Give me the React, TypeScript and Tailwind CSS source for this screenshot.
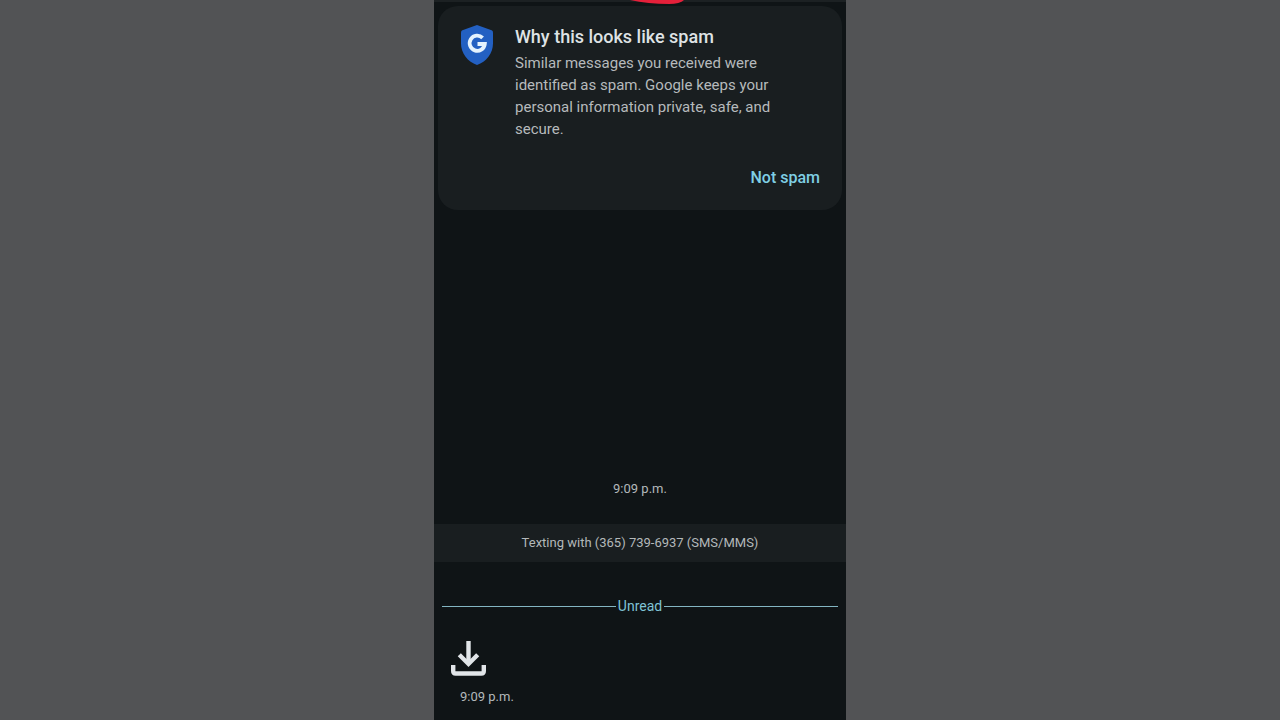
import React from "react";

const ShieldIcon = () => {
  return (
    <svg className="w-8 h-10 shrink-0" viewBox="0 0 32 40" fill="none" aria-hidden="true">
      <path
        d="M16 0 30.6 5.3Q32 5.9 32 7.4V18.5C32 28.3 25.2 37 16 40 6.8 37 0 28.3 0 18.5V7.4Q0 5.9 1.4 5.3Z"
        fill="#2360c2"
      />
      <path
        d="M21.6 12.8A7.6 7.6 0 1 0 23.8 19H16.5"
        stroke="#e4f2fd"
        strokeWidth="3.8"
      />
    </svg>
  );
};

const DownloadIcon = () => {
  return (
    <svg className="w-9 h-9" viewBox="0 0 36 36" fill="none" stroke="#e1e5e8" aria-hidden="true">
      <path d="M18.5 1V23" strokeWidth="4.4" />
      <path d="M9.3 14.8 18.5 24 27.7 14.8" strokeWidth="4.4" />
      <path d="M3.2 25V31Q3.2 33.5 5.7 33.5H31.3Q33.8 33.5 33.8 31V25" strokeWidth="4.4" />
    </svg>
  );
};

const SpamCard = () => {
  return (
    <section className="mx-1 rounded-[20px] bg-[#191e20] px-[22px] pt-[19px] pb-3">
      <div className="flex gap-[22px] pl-px">
        <ShieldIcon />
        <div className="pr-4">
          <h2 className="text-lg leading-6 font-medium text-[#dfe3e5]">Why this looks like spam</h2>
          <p className="mt-[3px] text-[15px] leading-[22px] text-[#b6babc]">
            Similar messages you received were identified as spam. Google keeps your personal
            information private, safe, and secure.
          </p>
        </div>
      </div>
      <div className="mt-[18px] flex justify-end">
        <button type="button" className="py-2 text-base leading-6 font-medium text-[#7fcfe4]">
          Not spam
        </button>
      </div>
    </section>
  );
};

const App = () => {
  return (
    <div className="min-h-screen bg-[#525355] font-['Roboto','Noto_Sans',sans-serif]">
      <main className="mx-auto flex min-h-screen w-full max-w-[412px] flex-col bg-[#0f1416]">
        <div className="mb-1 flex h-[2px] justify-center bg-[#1c2123]">
          <svg className="ml-9 h-1 w-14" viewBox="0 0 56 4" aria-hidden="true">
            <path d="M0 0H54Q50 4 39 4 18 4 0 0Z" fill="#e5203a" />
          </svg>
        </div>
        <SpamCard />
        <div className="mt-auto">
          <p className="text-center text-[13px] leading-5 text-[#b3b8ba]">9:09 p.m.</p>
          <p className="mt-[25px] bg-[#191e20] py-[10px] text-center text-[13px] leading-[18px] text-[#b3b8ba]">
            Texting with (365) 739-6937 (SMS/MMS)
          </p>
          <div className="mt-[34px] flex items-center gap-[2px] px-2 text-sm leading-5 text-[#7fc3d5]">
            <span className="h-px grow bg-[#83b5c2]" />
            <span>Unread</span>
            <span className="h-px grow bg-[#83b5c2]" />
          </div>
          <div className="mt-6 px-4">
            <button type="button" aria-label="Download message" className="block">
              <DownloadIcon />
            </button>
            <p className="mt-[11px] mb-[13px] px-[10px] text-[13px] leading-5 text-[#b3b8ba]">9:09 p.m.</p>
          </div>
        </div>
      </main>
    </div>
  );
};

export default App;
